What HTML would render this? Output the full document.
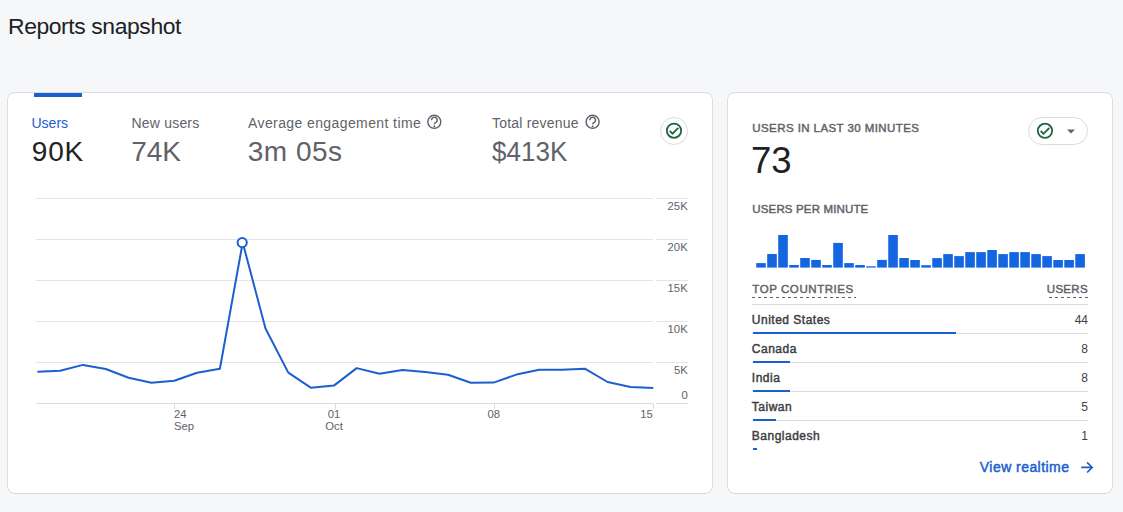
<!DOCTYPE html>
<html><head><meta charset="utf-8"><style>
html,body{margin:0;padding:0;}
body{width:1123px;height:512px;overflow:hidden;background:#f5f7f9;position:relative;font-family:"Liberation Sans",sans-serif;}
.card{position:absolute;background:#fff;border:1px solid #dadce0;border-radius:8px;box-sizing:border-box;}
</style></head><body>
<div style="position:absolute;left:8.00px;top:14.92px;font-size:22.9px;line-height:22.9px;color:#202124;font-weight:400;letter-spacing:-0.4px;white-space:nowrap;">Reports snapshot</div>
<div class="card" style="left:7px;top:92px;width:706px;height:402px;"></div>
<div class="card" style="left:727px;top:92px;width:386px;height:402px;"></div>
<div style="position:absolute;left:34px;top:93px;width:48px;height:4px;background:#1a60cf;"></div>
<div style="position:absolute;left:31.50px;top:116.05px;font-size:14px;line-height:14px;color:#1a60cf;font-weight:400;letter-spacing:0px;white-space:nowrap;">Users</div>
<div style="position:absolute;left:131.50px;top:116.05px;font-size:14px;line-height:14px;color:#5f6368;font-weight:400;letter-spacing:0.2px;white-space:nowrap;">New users</div>
<div style="position:absolute;left:248.00px;top:116.05px;font-size:14px;line-height:14px;color:#5f6368;font-weight:400;letter-spacing:0.4px;white-space:nowrap;">Average engagement time</div>
<div style="position:absolute;left:492.00px;top:116.05px;font-size:14px;line-height:14px;color:#5f6368;font-weight:400;letter-spacing:0.2px;white-space:nowrap;">Total revenue</div>
<div style="position:absolute;left:31.80px;top:138.10px;font-size:28px;line-height:28px;color:#202124;font-weight:400;letter-spacing:0.8px;white-space:nowrap;">90K</div>
<div style="position:absolute;left:131.20px;top:138.10px;font-size:28px;line-height:28px;color:#5f6368;font-weight:400;letter-spacing:0px;white-space:nowrap;">74K</div>
<div style="position:absolute;left:247.80px;top:138.10px;font-size:28px;line-height:28px;color:#5f6368;font-weight:400;letter-spacing:0.5px;white-space:nowrap;">3m 05s</div>
<div style="position:absolute;left:491.80px;top:138.10px;font-size:28px;line-height:28px;color:#5f6368;font-weight:400;letter-spacing:0px;white-space:nowrap;transform:scaleX(0.93);transform-origin:0 0;">$413K</div>
<svg style="position:absolute;left:422px;top:109px" width="24" height="24" viewBox="-12.30 -12.80 24 24"><circle cx="0" cy="0" r="6.5" fill="none" stroke="#5f6368" stroke-width="1.45"/><path d="M-2.75 -1.6A2.8 2.8 0 1 1 1.5 0.7C0.6 1.3 0 1.6 0 2.4" fill="none" stroke="#5f6368" stroke-width="1.45"/><circle cx="0" cy="4.35" r="0.9" fill="#5f6368"/></svg>
<svg style="position:absolute;left:580px;top:109px" width="24" height="24" viewBox="-12.60 -12.80 24 24"><circle cx="0" cy="0" r="6.5" fill="none" stroke="#5f6368" stroke-width="1.45"/><path d="M-2.75 -1.6A2.8 2.8 0 1 1 1.5 0.7C0.6 1.3 0 1.6 0 2.4" fill="none" stroke="#5f6368" stroke-width="1.45"/><circle cx="0" cy="4.35" r="0.9" fill="#5f6368"/></svg>
<div style="position:absolute;left:660px;top:116.5px;width:28px;height:28px;border:1px solid #dadce0;border-radius:50%;box-sizing:border-box;"></div>
<svg style="position:absolute;left:662px;top:118px" width="24" height="24" viewBox="-12.00 -12.70 24 24"><circle cx="0" cy="0" r="7.15" fill="none" stroke="#1e6640" stroke-width="1.8"/><path d="M-4.3 0.2L-1.5 3.0L4.3-2.8" fill="none" stroke="#1e6640" stroke-width="1.8"/></svg>
<svg style="position:absolute;left:0;top:0" width="1123" height="512"><line x1="36" y1="198.5" x2="653" y2="198.5" stroke="#e4e4e6" stroke-width="1"/><line x1="656" y1="198.5" x2="688" y2="198.5" stroke="#e4e4e6" stroke-width="1"/><line x1="36" y1="239.5" x2="653" y2="239.5" stroke="#e4e4e6" stroke-width="1"/><line x1="656" y1="239.5" x2="688" y2="239.5" stroke="#e4e4e6" stroke-width="1"/><line x1="36" y1="280.5" x2="653" y2="280.5" stroke="#e4e4e6" stroke-width="1"/><line x1="656" y1="280.5" x2="688" y2="280.5" stroke="#e4e4e6" stroke-width="1"/><line x1="36" y1="321.5" x2="653" y2="321.5" stroke="#e4e4e6" stroke-width="1"/><line x1="656" y1="321.5" x2="688" y2="321.5" stroke="#e4e4e6" stroke-width="1"/><line x1="36" y1="362.5" x2="653" y2="362.5" stroke="#e4e4e6" stroke-width="1"/><line x1="656" y1="362.5" x2="688" y2="362.5" stroke="#e4e4e6" stroke-width="1"/><line x1="36" y1="403.5" x2="653" y2="403.5" stroke="#dadce0" stroke-width="1"/><line x1="656" y1="403.5" x2="688" y2="403.5" stroke="#dadce0" stroke-width="1"/><line x1="174.5" y1="404" x2="174.5" y2="409" stroke="#dadce0" stroke-width="1"/><line x1="335.5" y1="404" x2="335.5" y2="409" stroke="#dadce0" stroke-width="1"/><line x1="494.5" y1="404" x2="494.5" y2="409" stroke="#dadce0" stroke-width="1"/><line x1="653.5" y1="404" x2="653.5" y2="409" stroke="#dadce0" stroke-width="1"/><polyline points="37.4,371.7 60.2,370.8 83.0,364.9 105.8,369.0 128.6,377.8 151.4,382.7 174.3,380.7 197.1,372.7 219.9,368.8 242.7,242.5 265.5,328.5 288.3,372.6 311.1,387.8 333.9,385.6 356.7,368.1 379.5,373.7 402.4,370.0 425.2,372.0 448.0,374.8 470.8,382.8 493.6,382.6 516.4,374.6 539.2,369.8 562.0,369.8 584.8,368.7 607.6,382.0 630.5,386.9 653.3,387.9" fill="none" stroke="#1a60cf" stroke-width="2" stroke-linejoin="round"/><circle cx="242.2" cy="242.6" r="4.6" fill="#fff" stroke="#1a60cf" stroke-width="2"/></svg>
<div style="position:absolute;right:435.00px;top:201.03px;font-size:11.3px;line-height:11.3px;color:#5f6368;font-weight:400;letter-spacing:0.15px;white-space:nowrap;">25K</div>
<div style="position:absolute;right:435.00px;top:242.03px;font-size:11.3px;line-height:11.3px;color:#5f6368;font-weight:400;letter-spacing:0.15px;white-space:nowrap;">20K</div>
<div style="position:absolute;right:435.00px;top:283.03px;font-size:11.3px;line-height:11.3px;color:#5f6368;font-weight:400;letter-spacing:0.15px;white-space:nowrap;">15K</div>
<div style="position:absolute;right:435.00px;top:324.13px;font-size:11.3px;line-height:11.3px;color:#5f6368;font-weight:400;letter-spacing:0.15px;white-space:nowrap;">10K</div>
<div style="position:absolute;right:435.00px;top:365.13px;font-size:11.3px;line-height:11.3px;color:#5f6368;font-weight:400;letter-spacing:0.15px;white-space:nowrap;">5K</div>
<div style="position:absolute;right:435.00px;top:390.03px;font-size:11.3px;line-height:11.3px;color:#5f6368;font-weight:400;letter-spacing:0.15px;white-space:nowrap;">0</div>
<div style="position:absolute;left:174.00px;top:409.23px;font-size:11.3px;line-height:11.3px;color:#5f6368;font-weight:400;letter-spacing:0px;white-space:nowrap;">24</div>
<div style="position:absolute;left:174.00px;top:421.23px;font-size:11.3px;line-height:11.3px;color:#5f6368;font-weight:400;letter-spacing:0px;white-space:nowrap;">Sep</div>
<div style="position:absolute;left:134.00px;width:400px;text-align:center;top:409.23px;font-size:11.3px;line-height:11.3px;color:#5f6368;font-weight:400;letter-spacing:0px;white-space:nowrap;">01</div>
<div style="position:absolute;left:134.00px;width:400px;text-align:center;top:421.23px;font-size:11.3px;line-height:11.3px;color:#5f6368;font-weight:400;letter-spacing:0px;white-space:nowrap;">Oct</div>
<div style="position:absolute;left:293.80px;width:400px;text-align:center;top:409.23px;font-size:11.3px;line-height:11.3px;color:#5f6368;font-weight:400;letter-spacing:0px;white-space:nowrap;">08</div>
<div style="position:absolute;right:470.20px;top:409.23px;font-size:11.3px;line-height:11.3px;color:#5f6368;font-weight:400;letter-spacing:0px;white-space:nowrap;">15</div>
<div style="position:absolute;left:752.30px;top:122.97px;font-size:11.5px;line-height:11.5px;color:#5f6368;font-weight:400;letter-spacing:0.42px;white-space:nowrap;-webkit-text-stroke:0.45px #5f6368;">USERS IN LAST 30 MINUTES</div>
<div style="position:absolute;left:751.00px;top:142.70px;font-size:36.5px;line-height:36.5px;color:#202124;font-weight:400;letter-spacing:0px;white-space:nowrap;">73</div>
<div style="position:absolute;left:1028px;top:117px;width:60px;height:28px;border:1px solid #dadce0;border-radius:14px;box-sizing:border-box;"></div>
<svg style="position:absolute;left:1033px;top:118px" width="24" height="24" viewBox="-12.00 -12.80 24 24"><circle cx="0" cy="0" r="7.15" fill="none" stroke="#1e6640" stroke-width="1.8"/><path d="M-4.3 0.2L-1.5 3.0L4.3-2.8" fill="none" stroke="#1e6640" stroke-width="1.8"/></svg>
<svg style="position:absolute;left:1067px;top:129px" width="8" height="5" viewBox="0 0 8 4"><path d="M0 0h8L4 4z" fill="#5f6368"/></svg>
<div style="position:absolute;left:752.30px;top:203.67px;font-size:11.5px;line-height:11.5px;color:#5f6368;font-weight:400;letter-spacing:0.15px;white-space:nowrap;-webkit-text-stroke:0.45px #5f6368;">USERS PER MINUTE</div>
<svg style="position:absolute;left:0;top:0" width="1123" height="512"><rect x="756.20" y="263.10" width="9.6" height="4.50" fill="#1366e0"/><rect x="767.20" y="254.00" width="9.6" height="13.60" fill="#1366e0"/><rect x="778.21" y="235.00" width="9.6" height="32.60" fill="#1366e0"/><rect x="789.21" y="265.00" width="9.6" height="2.60" fill="#1366e0"/><rect x="800.21" y="258.00" width="9.6" height="9.60" fill="#1366e0"/><rect x="811.22" y="259.90" width="9.6" height="7.70" fill="#1366e0"/><rect x="822.22" y="265.00" width="9.6" height="2.60" fill="#1366e0"/><rect x="833.22" y="242.90" width="9.6" height="24.70" fill="#1366e0"/><rect x="844.22" y="263.10" width="9.6" height="4.50" fill="#1366e0"/><rect x="855.23" y="265.00" width="9.6" height="2.60" fill="#1366e0"/><rect x="866.23" y="266.30" width="9.6" height="1.30" fill="#1366e0"/><rect x="877.23" y="259.90" width="9.6" height="7.70" fill="#1366e0"/><rect x="888.24" y="235.00" width="9.6" height="32.60" fill="#1366e0"/><rect x="899.24" y="258.00" width="9.6" height="9.60" fill="#1366e0"/><rect x="910.24" y="260.00" width="9.6" height="7.60" fill="#1366e0"/><rect x="921.25" y="265.20" width="9.6" height="2.40" fill="#1366e0"/><rect x="932.25" y="258.10" width="9.6" height="9.50" fill="#1366e0"/><rect x="943.25" y="254.10" width="9.6" height="13.50" fill="#1366e0"/><rect x="954.25" y="256.10" width="9.6" height="11.50" fill="#1366e0"/><rect x="965.26" y="252.10" width="9.6" height="15.50" fill="#1366e0"/><rect x="976.26" y="252.10" width="9.6" height="15.50" fill="#1366e0"/><rect x="987.26" y="250.00" width="9.6" height="17.60" fill="#1366e0"/><rect x="998.27" y="254.10" width="9.6" height="13.50" fill="#1366e0"/><rect x="1009.27" y="252.10" width="9.6" height="15.50" fill="#1366e0"/><rect x="1020.27" y="252.10" width="9.6" height="15.50" fill="#1366e0"/><rect x="1031.28" y="254.10" width="9.6" height="13.50" fill="#1366e0"/><rect x="1042.28" y="256.10" width="9.6" height="11.50" fill="#1366e0"/><rect x="1053.28" y="260.00" width="9.6" height="7.60" fill="#1366e0"/><rect x="1064.28" y="260.00" width="9.6" height="7.60" fill="#1366e0"/><rect x="1075.29" y="254.10" width="9.6" height="13.50" fill="#1366e0"/></svg>
<div style="position:absolute;left:752.30px;top:284.07px;font-size:11.5px;line-height:11.5px;color:#5f6368;font-weight:400;letter-spacing:0.57px;white-space:nowrap;-webkit-text-stroke:0.45px #5f6368;">TOP COUNTRIES</div>
<div style="position:absolute;right:35.10px;top:284.07px;font-size:11.5px;line-height:11.5px;color:#5f6368;font-weight:400;letter-spacing:0.3px;white-space:nowrap;-webkit-text-stroke:0.45px #5f6368;">USERS</div>
<svg style="position:absolute;left:0;top:0" width="1123" height="512"><line x1="752" y1="297.5" x2="856" y2="297.5" stroke="#5f6368" stroke-width="1" stroke-dasharray="3 3"/><line x1="1049" y1="297.5" x2="1088" y2="297.5" stroke="#5f6368" stroke-width="1" stroke-dasharray="3 3"/></svg>
<div style="position:absolute;left:751.80px;top:313.74px;font-size:12px;line-height:12px;color:#3c4043;font-weight:400;letter-spacing:0.5px;white-space:nowrap;-webkit-text-stroke:0.45px #3c4043;">United States</div>
<div style="position:absolute;right:35.00px;top:313.74px;font-size:12px;line-height:12px;color:#3c4043;font-weight:400;letter-spacing:0px;white-space:nowrap;">44</div>
<div style="position:absolute;left:752px;top:304px;width:336px;height:1px;background:#dadce0;"></div>
<div style="position:absolute;z-index:2;left:752.5px;top:332px;width:203.7px;height:2px;background:#1a60cf;"></div>
<div style="position:absolute;left:751.80px;top:342.69px;font-size:12px;line-height:12px;color:#3c4043;font-weight:400;letter-spacing:0.5px;white-space:nowrap;-webkit-text-stroke:0.45px #3c4043;">Canada</div>
<div style="position:absolute;right:35.00px;top:342.69px;font-size:12px;line-height:12px;color:#3c4043;font-weight:400;letter-spacing:0px;white-space:nowrap;">8</div>
<div style="position:absolute;left:752px;top:333px;width:336px;height:1px;background:#dadce0;"></div>
<div style="position:absolute;z-index:2;left:752.5px;top:361px;width:37.0px;height:2px;background:#1a60cf;"></div>
<div style="position:absolute;left:751.80px;top:371.64px;font-size:12px;line-height:12px;color:#3c4043;font-weight:400;letter-spacing:0.5px;white-space:nowrap;-webkit-text-stroke:0.45px #3c4043;">India</div>
<div style="position:absolute;right:35.00px;top:371.64px;font-size:12px;line-height:12px;color:#3c4043;font-weight:400;letter-spacing:0px;white-space:nowrap;">8</div>
<div style="position:absolute;left:752px;top:362px;width:336px;height:1px;background:#dadce0;"></div>
<div style="position:absolute;z-index:2;left:752.5px;top:390px;width:37.0px;height:2px;background:#1a60cf;"></div>
<div style="position:absolute;left:751.80px;top:400.59px;font-size:12px;line-height:12px;color:#3c4043;font-weight:400;letter-spacing:0.5px;white-space:nowrap;-webkit-text-stroke:0.45px #3c4043;">Taiwan</div>
<div style="position:absolute;right:35.00px;top:400.59px;font-size:12px;line-height:12px;color:#3c4043;font-weight:400;letter-spacing:0px;white-space:nowrap;">5</div>
<div style="position:absolute;left:752px;top:391px;width:336px;height:1px;background:#dadce0;"></div>
<div style="position:absolute;z-index:2;left:752.5px;top:419px;width:23.2px;height:2px;background:#1a60cf;"></div>
<div style="position:absolute;left:751.80px;top:429.54px;font-size:12px;line-height:12px;color:#3c4043;font-weight:400;letter-spacing:0.5px;white-space:nowrap;-webkit-text-stroke:0.45px #3c4043;">Bangladesh</div>
<div style="position:absolute;right:35.00px;top:429.54px;font-size:12px;line-height:12px;color:#3c4043;font-weight:400;letter-spacing:0px;white-space:nowrap;">1</div>
<div style="position:absolute;left:752px;top:420px;width:336px;height:1px;background:#dadce0;"></div>
<div style="position:absolute;z-index:2;left:752.5px;top:448px;width:4.6px;height:2px;background:#1a60cf;"></div>
<div style="position:absolute;left:979.80px;top:460.25px;font-size:14px;line-height:14px;color:#1a60cf;font-weight:400;letter-spacing:0.45px;white-space:nowrap;-webkit-text-stroke:0.45px #1a60cf;">View realtime</div>
<svg style="position:absolute;left:0;top:0" width="1123" height="512"><path d="M1081.2 467.4H1092.2M1087.1 462.3L1092.2 467.4L1087.1 472.5" fill="none" stroke="#1a60cf" stroke-width="1.7"/></svg>
</body></html>
